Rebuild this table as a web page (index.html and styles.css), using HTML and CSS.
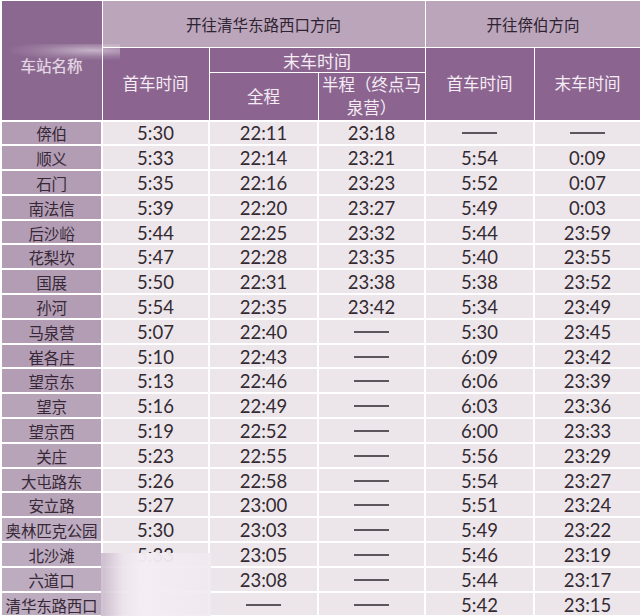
FILE: index.html
```html
<!DOCTYPE html>
<html lang="zh">
<head>
<meta charset="utf-8">
<title>时刻表</title>
<link rel="stylesheet" href="styles.css">
</head>
<body>
<div class="wrap">
<table class="tt">
  <colgroup>
    <col class="c-name"><col class="c-a"><col class="c-b"><col class="c-a"><col class="c-b"><col class="c-a">
  </colgroup>
  <thead>
    <tr class="h1">
      <th rowspan="3" class="hname"><span>车站名称</span></th>
      <th colspan="3" class="hdir">开往清华东路西口方向</th>
      <th colspan="2" class="hdir">开往倴伯方向</th>
    </tr>
    <tr class="h2">
      <th rowspan="2" class="hsub">首车时间</th>
      <th colspan="2" class="hsub">末车时间</th>
      <th rowspan="2" class="hsub">首车时间</th>
      <th rowspan="2" class="hsub">末车时间</th>
    </tr>
    <tr class="h3">
      <th class="hsub">全程</th>
      <th class="hsub half">半程（终点马泉营）</th>
    </tr>
  </thead>
  <tbody>
    <tr><td>倴伯</td><td>5:30</td><td>22:11</td><td>23:18</td><td><span class="dash"></span></td><td><span class="dash"></span></td></tr>
    <tr><td>顺义</td><td>5:33</td><td>22:14</td><td>23:21</td><td>5:54</td><td>0:09</td></tr>
    <tr><td>石门</td><td>5:35</td><td>22:16</td><td>23:23</td><td>5:52</td><td>0:07</td></tr>
    <tr><td>南法信</td><td>5:39</td><td>22:20</td><td>23:27</td><td>5:49</td><td>0:03</td></tr>
    <tr><td>后沙峪</td><td>5:44</td><td>22:25</td><td>23:32</td><td>5:44</td><td>23:59</td></tr>
    <tr><td>花梨坎</td><td>5:47</td><td>22:28</td><td>23:35</td><td>5:40</td><td>23:55</td></tr>
    <tr><td>国展</td><td>5:50</td><td>22:31</td><td>23:38</td><td>5:38</td><td>23:52</td></tr>
    <tr><td>孙河</td><td>5:54</td><td>22:35</td><td>23:42</td><td>5:34</td><td>23:49</td></tr>
    <tr><td>马泉营</td><td>5:07</td><td>22:40</td><td><span class="dash"></span></td><td>5:30</td><td>23:45</td></tr>
    <tr><td>崔各庄</td><td>5:10</td><td>22:43</td><td><span class="dash"></span></td><td>6:09</td><td>23:42</td></tr>
    <tr><td>望京东</td><td>5:13</td><td>22:46</td><td><span class="dash"></span></td><td>6:06</td><td>23:39</td></tr>
    <tr><td>望京</td><td>5:16</td><td>22:49</td><td><span class="dash"></span></td><td>6:03</td><td>23:36</td></tr>
    <tr><td>望京西</td><td>5:19</td><td>22:52</td><td><span class="dash"></span></td><td>6:00</td><td>23:33</td></tr>
    <tr><td>关庄</td><td>5:23</td><td>22:55</td><td><span class="dash"></span></td><td>5:56</td><td>23:29</td></tr>
    <tr><td>大屯路东</td><td>5:26</td><td>22:58</td><td><span class="dash"></span></td><td>5:54</td><td>23:27</td></tr>
    <tr><td>安立路</td><td>5:27</td><td>23:00</td><td><span class="dash"></span></td><td>5:51</td><td>23:24</td></tr>
    <tr><td>奥林匹克公园</td><td>5:30</td><td>23:03</td><td><span class="dash"></span></td><td>5:49</td><td>23:22</td></tr>
    <tr><td>北沙滩</td><td>5:33</td><td>23:05</td><td><span class="dash"></span></td><td>5:46</td><td>23:19</td></tr>
    <tr><td>六道口</td><td></td><td>23:08</td><td><span class="dash"></span></td><td>5:44</td><td>23:17</td></tr>
    <tr><td>清华东路西口</td><td></td><td><span class="dash"></span></td><td><span class="dash"></span></td><td>5:42</td><td>23:15</td></tr>
  </tbody>
</table>
<div class="glare"></div>
<div class="smudge"></div>
</div>
</body>
</html>
```
FILE: styles.css
```css
html, body {
  margin: 0;
  padding: 0;
  background: #ffffff;
}
.wrap {
  position: relative;
  width: 640px;
  height: 616px;
  overflow: hidden;
}
.tt {
  width: 640px;
  table-layout: fixed;
  border-collapse: collapse;
  font-family: "Noto Sans CJK SC", sans-serif;
}
.c-name { width: 101px; }
.c-a { width: 107px; }
.c-b { width: 109px; }

.tt th, .tt td {
  border: 1px solid #ffffff;
  padding: 0;
  text-align: center;
  vertical-align: middle;
  font-weight: 400;
}
.tt td {
  border-width: 2px 2px;
}
.h1 { height: 47px; }
.h2 { height: 25px; }
.h3 { height: 48px; }

.tt .hname {
  background: #8b6890;
  color: #f4eaf3;
  font-size: 15.5px;
  vertical-align: top;
}
.hname span {
  display: block;
  margin-top: 53px;
  opacity: 0.85;
  text-shadow: 0 0 1px rgba(255,255,255,0.6);
}
.hdir {
  background: #bba5bb;
  color: #2e2330;
  font-size: 15.5px;
}
.hsub {
  background: #8b6590;
  color: #f5ecf4;
  font-size: 16.5px;
  line-height: 23px;
}
.h2 .hsub[colspan] { font-size: 17px; }
.half {
  padding: 0 3px;
}

.tt tbody tr { height: 24.8px; }
.tt tbody td {
  background: #ece6eb;
  color: #332a31;
  font-family: "Lato", "DejaVu Sans", sans-serif;
  font-size: 18.5px;
  line-height: 20px;
  padding-top: 1px;
}
.tt tbody td:first-child {
  background: #b39db4;
  color: #362836;
  font-family: "Noto Sans CJK SC", sans-serif;
  font-size: 15.5px;
  white-space: nowrap;
  letter-spacing: -0.2px;
}
.tt tbody tr:nth-child(n+12) td:first-child { background: #b8a4b9; }
.tt tbody tr:nth-child(n+17) td:first-child { background: #bdabc0; }

.dash {
  display: block;
  width: 35px;
  height: 2px;
  margin: 0 auto;
  background: #5e545c;
}

.glare {
  position: absolute;
  left: 10px;
  top: 44px;
  width: 110px;
  height: 16px;
  background: radial-gradient(ellipse at 75% 40%, rgba(255,255,255,0.5), rgba(255,255,255,0.15) 45%, rgba(255,255,255,0) 75%);
  pointer-events: none;
}
.smudge {
  position: absolute;
  left: 101px;
  top: 553px;
  width: 110px;
  height: 63px;
  background: linear-gradient(90deg, rgba(196,178,198,0.8) 0, rgba(236,228,236,0.9) 22px, rgba(244,238,244,0.97) 40px, rgba(240,234,240,0.9) 100%);
  pointer-events: none;
}
```
